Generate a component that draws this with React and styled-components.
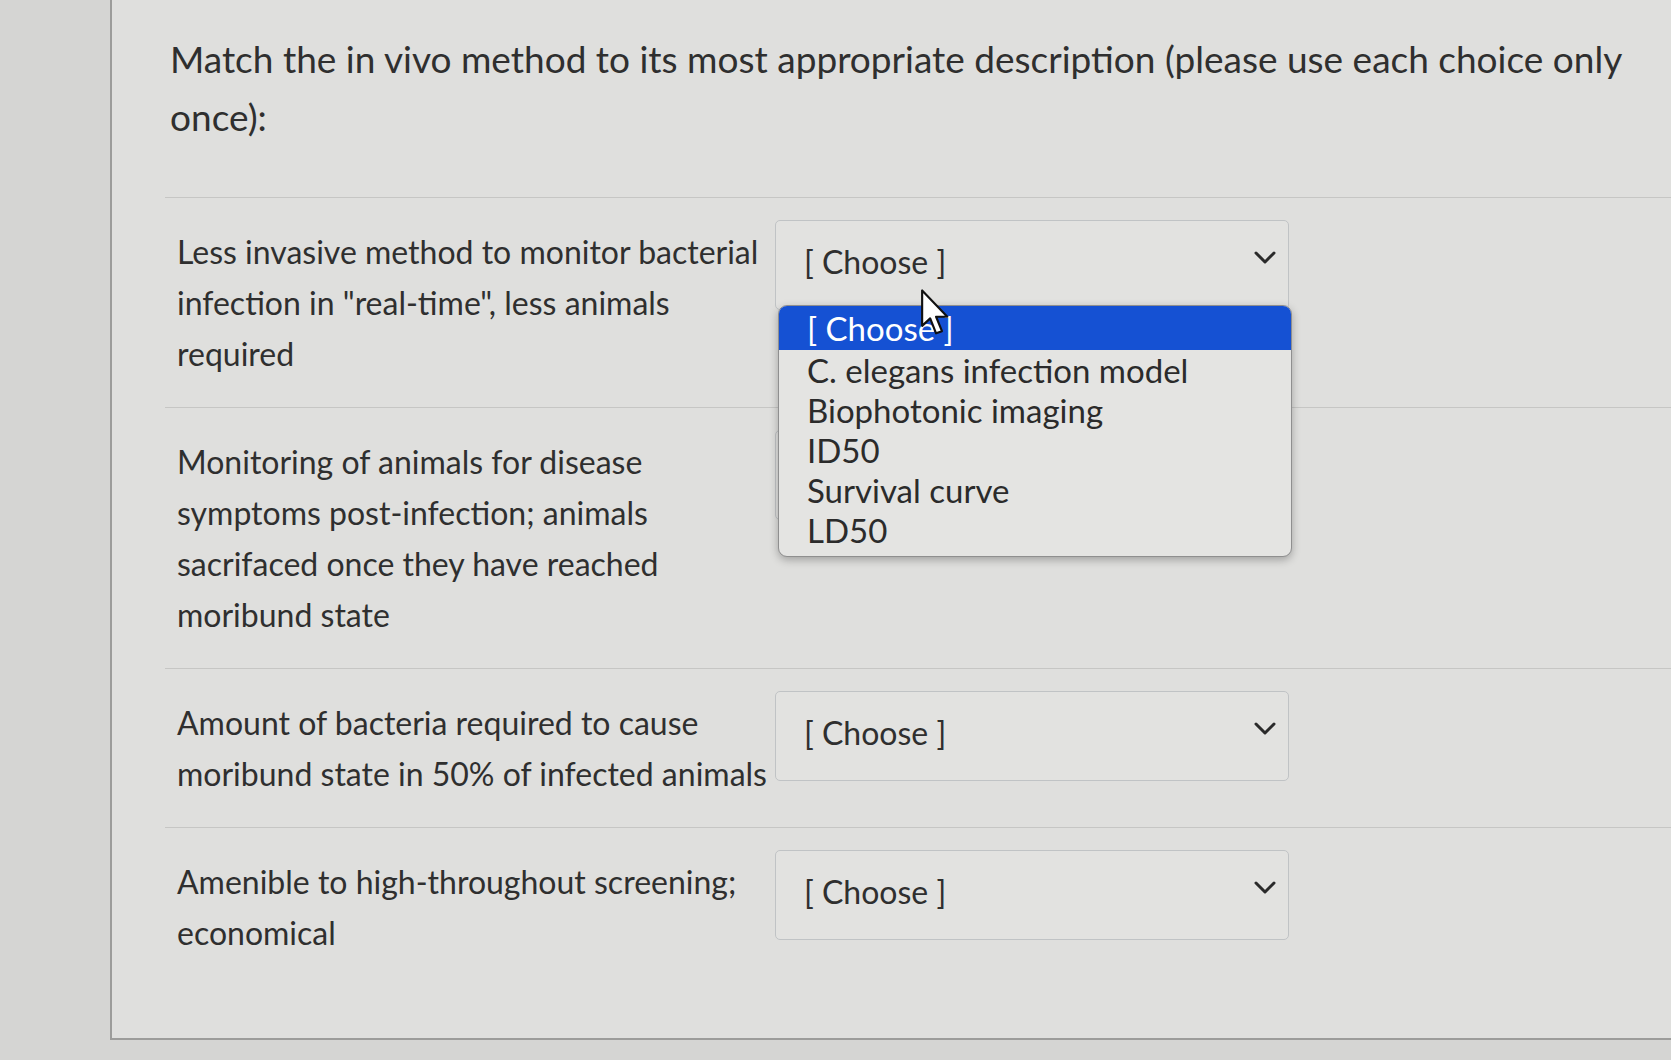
import React from 'react';
import styled, {createGlobalStyle} from 'styled-components';

const GlobalStyle = createGlobalStyle`
  html, body {
    margin: 0;
    padding: 0;
    background: #d5d5d3;
    font-family: Lato, "Noto Sans", sans-serif;
    color: #2f2f2f;
  }
  * { box-sizing: border-box; }
`;

const Page = styled.div`
  width: 1671px;
  height: 1060px;
  overflow: hidden;
`;

const Panel = styled.section`
  margin-left: 110px;
  height: 1040px;
  background: #dfdfdd;
  border-left: 2px solid #9c9c9a;
  border-bottom: 2px solid #9c9c9a;
  padding: 30px 0 0 53px;
`;

const Title = styled.h2`
  margin: 0 0 51px 5px;
  width: 1500px;
  font-size: 37px;
  font-weight: 400;
  line-height: 58px;
  color: #2f2f2f;
`;

const Row = styled.div`
  display: flex;
  align-items: flex-start;
  border-top: 1px solid #c6c6c4;
  padding: 28px 0 28px 12px;
`;

const Label = styled.div`
  width: 598px;
  flex: none;
  font-size: 32px;
  line-height: 51px;
  color: #2f2f2f;
`;

const SelectWrap = styled.div`
  position: relative;
  width: 514px;
  margin-top: -6px;
`;

const SelectBox = styled.div`
  height: 90px;
  display: flex;
  align-items: center;
  justify-content: space-between;
  padding: 0 12px 8px 28px;
  border: 1px solid #c0c3c5;
  border-radius: 5px;
  background: #e2e2e0;
  font-size: 32px;
  color: #2f2f2f;
`;

const Chevron = styled.svg`
  width: 22px;
  height: 22px;
  margin-top: -8px;
`;

const List = styled.ul`
  position: absolute;
  top: calc(100% - 5px);
  left: 3px;
  width: 514px;
  margin: 0;
  padding: 0 0 6px;
  list-style: none;
  background: #e4e4e2;
  border: 1px solid #8f8f8f;
  border-radius: 9px;
  overflow: hidden;
  box-shadow: 0 3px 9px rgba(0, 0, 0, 0.28);
  z-index: 2;
`;

const Option = styled.li`
  padding: ${p => (p.$active ? '2px 28px 2px' : '0 28px')};
  font-size: 33px;
  line-height: 40px;
  color: ${p => (p.$active ? '#fff' : '#2b2b2b')};
  background: ${p => (p.$active ? '#1551d3' : 'transparent')};
`;

const Cursor = styled.svg`
  position: absolute;
  left: 145px;
  top: 68px;
  width: 30px;
  height: 50px;
  z-index: 3;
`;

const options = [
  '[ Choose ]',
  'C. elegans infection model',
  'Biophotonic imaging',
  'ID50',
  'Survival curve',
  'LD50',
];

const rows = [
  'Less invasive method to monitor bacterial infection in "real-time", less animals required',
  'Monitoring of animals for disease symptoms post-infection; animals sacrifaced once they have reached moribund state',
  'Amount of bacteria required to cause moribund state in 50% of infected animals',
  'Amenible to high-throughout screening; economical',
];

const ChevronIcon = () => (
  <Chevron viewBox="0 0 22 22">
    <path d="M2 7l9 9 9-9" fill="none" stroke="#2a2a2a" strokeWidth="3" strokeLinecap="round" strokeLinejoin="round" />
  </Chevron>
);

const Select = ({open}) => (
  <SelectWrap>
    <SelectBox>
      <span>[ Choose ]</span>
      <ChevronIcon />
    </SelectBox>
    {open && (
      <>
        <List>
          {options.map((o, i) => (
            <Option key={o} $active={i === 0}>{o}</Option>
          ))}
        </List>
        <Cursor viewBox="0 0 28 46">
          <path d="M2 2 L2 35 L9.5 28 L15 42 L20.5 40 L15 26.5 L25.5 26.5 Z" fill="#fff" stroke="#111" strokeWidth="2" strokeLinejoin="round" />
        </Cursor>
      </>
    )}
  </SelectWrap>
);

export default function App() {
  return (
    <Page>
      <GlobalStyle />
      <Panel>
        <Title>
          Match the in vivo method to its most appropriate description (please use each choice only once):
        </Title>
        {rows.map((text, i) => (
          <Row key={i}>
            <Label>{text}</Label>
            <Select open={i === 0} />
          </Row>
        ))}
      </Panel>
    </Page>
  );
}
